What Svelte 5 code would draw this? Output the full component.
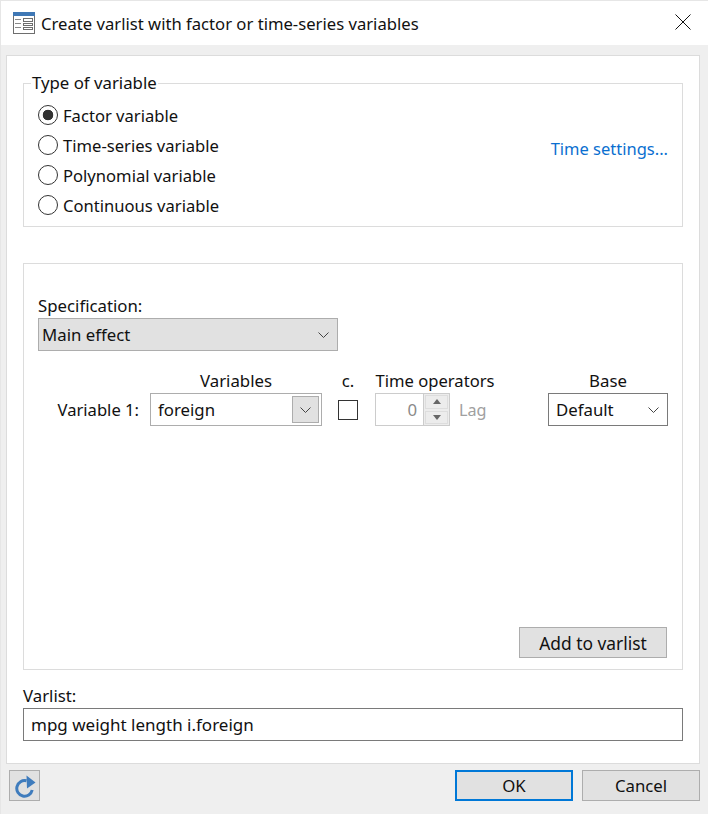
<script lang="ts">
  // Stata-style "Create varlist" dialog.
  const types = ['Factor variable', 'Time-series variable', 'Polynomial variable', 'Continuous variable'];
  let selected = $state(0);
</script>

<div class="window">
  <header class="titlebar">
    <svg class="appicon" width="22" height="22" viewBox="0 0 22 22" aria-hidden="true">
      <rect x="0.5" y="0.5" width="21" height="21" fill="#fff" stroke="#6e6e6e" />
      <rect x="0" y="0" width="22" height="4" fill="#3f78b5" />
      <path d="M2 7.5h6M2 11.5h6M2 15.5h6" stroke="#8a8a8a" fill="none" />
      <rect x="10.5" y="6.5" width="9" height="3" fill="#fff" stroke="#6e6e6e" />
      <rect x="10.5" y="11.5" width="9" height="2" fill="#fff" stroke="#6e6e6e" />
      <rect x="10.5" y="15.5" width="9" height="2" fill="#fff" stroke="#6e6e6e" />
    </svg>
    <span class="title">Create varlist with factor or time-series variables</span>
    <button class="close" aria-label="Close">
      <svg width="16" height="16" viewBox="0 0 16 16"><path d="M0.5 0.5l15 15M15.5 0.5l-15 15" stroke="#111" fill="none" /></svg>
    </button>
  </header>

  <main class="panel">
    <fieldset class="type-group">
      <legend>Type of variable</legend>
      <div class="radios">
        {#each types as label, i}
          <label class="radio">
            <input type="radio" name="vartype" checked={i === selected} onchange={() => (selected = i)} />
            <span>{label}</span>
          </label>
        {/each}
      </div>
      <span class="link">Time settings...</span>
    </fieldset>

    <section class="spec-group">
      <label class="spec-label" for="spec">Specification:</label>
      <div class="combo flat" id="spec">
        <span>Main effect</span>
        <svg class="chev" width="11" height="6" viewBox="0 0 11 6"><path d="M0.5 0.5l5 5 5-5" stroke="#444" fill="none" /></svg>
      </div>

      <div class="var-grid">
        <span></span>
        <span class="head">Variables</span>
        <span class="head">c.</span>
        <span class="head time-head">Time operators</span>
        <span class="head">Base</span>

        <span class="var-label">Variable 1:</span>
        <div class="combo edit">
          <span>foreign</span>
          <span class="drop">
            <svg width="11" height="6" viewBox="0 0 11 6"><path d="M0.5 0.5l5 5 5-5" stroke="#444" fill="none" /></svg>
          </span>
        </div>
        <span class="checkbox"></span>
        <div class="time-cell">
          <div class="spin">
            <span class="spin-val">0</span>
            <span class="spin-btns">
              <span class="up"></span>
              <span class="down"></span>
            </span>
          </div>
          <span class="lag">Lag</span>
        </div>
        <div class="combo base">
          <span>Default</span>
          <svg class="chev" width="11" height="6" viewBox="0 0 11 6"><path d="M0.5 0.5l5 5 5-5" stroke="#444" fill="none" /></svg>
        </div>
      </div>

      <div class="add-row">
        <button class="btn add">Add to varlist</button>
      </div>
    </section>

    <div class="varlist">
      <label for="varlist">Varlist:</label>
      <input id="varlist" value="mpg weight length i.foreign" />
    </div>
  </main>

  <footer class="footer">
    <button class="btn refresh" aria-label="Reset">
      <svg width="24" height="24" viewBox="0 0 24 24" aria-hidden="true">
        <path d="M13.5 6.8A7.8 7.8 0 1 0 19.2 16" fill="none" stroke="#3f7cbd" stroke-width="3" />
        <path d="M13.5 1.5L22.5 8.5 14 14.5z" fill="#3f7cbd" />
      </svg>
    </button>
    <div class="actions">
      <button class="btn ok">OK</button>
      <button class="btn cancel">Cancel</button>
    </div>
  </footer>
</div>

<style>
  :global(body) {
    margin: 0;
    background: #e6e6e6;
  }
  .window {
    box-sizing: border-box;
    width: 707px;
    height: 813px;
    margin: 1px 0 0 1px;
    background: #efefef;
    font-family: "Noto Sans", "Open Sans", sans-serif;
    font-size: 16.8px;
    color: #111;
    display: flex;
    flex-direction: column;
  }
  .titlebar {
    height: 44px;
    flex: none;
    background: #fff;
    display: flex;
    align-items: center;
    padding: 0 17px 0 12px;
  }
  .appicon {
    margin-right: 6px;
    margin-top: -1px;
  }
  .title {
    flex: 1;
    font-size: 16.65px;
  }
  .close {
    border: none;
    background: none;
    padding: 0;
    display: flex;
    margin-top: -2px;
  }
  .panel {
    box-sizing: border-box;
    height: 709px;
    margin: 10px 8px 0 5px;
    background: #fff;
    border: 1px solid #dcdcdc;
    padding: 0 16px;
    display: flex;
    flex-direction: column;
    flex: none;
  }
  .type-group {
    box-sizing: border-box;
    height: 153px;
    margin: 18px 0 0;
    padding: 0 14px;
    border: 1px solid #dcdcdc;
    display: flex;
    align-items: flex-start;
    justify-content: space-between;
    min-inline-size: 0;
  }
  .type-group legend {
    padding: 0 1px;
    margin-left: -7px;
    line-height: 18px;
  }
  .radios {
    display: flex;
    flex-direction: column;
    margin-top: 8px;
    font-size: 16.6px;
  }
  .radio {
    display: flex;
    align-items: center;
    height: 30px;
    gap: 5px;
  }
  .radio input {
    appearance: none;
    box-sizing: border-box;
    width: 20px;
    height: 20px;
    margin: 0;
    border: 1px solid #333;
    border-radius: 50%;
    background: #fff;
  }
  .radio input:checked {
    background: radial-gradient(circle, #333 0 5px, #fff 5.6px);
  }
  .link {
    color: #0a6fd0;
    margin-top: 45px;
    font-size: 16.5px;
  }
  .spec-group {
    box-sizing: border-box;
    height: 407px;
    margin-top: 36px;
    padding: 29px 14px 11px;
    border: 1px solid #dcdcdc;
    display: flex;
    flex-direction: column;
  }
  .spec-label {
    line-height: 26px;
    height: 25px;
  }
  .combo {
    box-sizing: border-box;
    height: 33px;
    display: flex;
    align-items: center;
    justify-content: space-between;
    border: 1px solid #adadad;
    background: #fff;
  }
  .combo.flat {
    width: 300px;
    background: #e1e1e1;
    padding: 0 8px 0 3px;
  }
  .var-grid {
    display: grid;
    grid-template-columns: 112px 188px 37px 173px 120px;
    grid-template-rows: 24px 33px;
    margin-top: 18px;
    align-items: center;
  }
  .head {
    text-align: center;
    padding-bottom: 1px;
  }
  .head:nth-child(2) {
    width: 172px;
  }
  .head:nth-child(3) {
    width: 20px;
  }
  .time-head {
    width: 120px;
    white-space: nowrap;
    font-size: 16.6px;
  }
  .var-label {
    text-align: right;
    padding-right: 11px;
    font-size: 16.6px;
  }
  .combo.edit {
    width: 172px;
    padding: 0 2px 0 7px;
  }
  .drop {
    box-sizing: border-box;
    width: 27px;
    height: 27px;
    background: #e1e1e1;
    border: 1px solid #adadad;
    display: flex;
    align-items: center;
    justify-content: center;
  }
  .checkbox {
    box-sizing: border-box;
    width: 20px;
    height: 20px;
    border: 1px solid #333;
    background: #fff;
  }
  .time-cell {
    display: flex;
    align-items: center;
    gap: 9px;
  }
  .spin {
    box-sizing: border-box;
    width: 75px;
    height: 33px;
    border: 1px solid #ccc;
    display: flex;
    align-items: center;
  }
  .spin-val {
    flex: 1;
    text-align: right;
    padding-right: 6px;
    color: #8a8a8a;
  }
  .spin-btns {
    width: 26px;
    height: 31px;
    background: #ececec;
    border-left: 1px solid #ccc;
    display: flex;
    flex-direction: column;
    gap: 2px;
    box-sizing: border-box;
    padding: 1px;
  }
  .up,
  .down {
    flex: 1;
    border: 1px solid #ddd;
    display: flex;
    align-items: center;
    justify-content: center;
  }
  .up::after {
    content: "";
    border: 4.5px solid transparent;
    border-top: none;
    border-bottom: 5px solid #666;
  }
  .down::after {
    content: "";
    border: 4.5px solid transparent;
    border-bottom: none;
    border-top: 5px solid #666;
  }
  .lag {
    color: #a0a0a0;
    font-size: 16.2px;
  }
  .combo.base {
    width: 120px;
    border-color: #7a7a7a;
    padding: 0 8px 0 7px;
  }
  .add-row {
    margin-top: auto;
    display: flex;
    justify-content: flex-end;
    padding-right: 1px;
  }
  .btn {
    box-sizing: border-box;
    height: 31px;
    border: 1px solid #adadad;
    background: #e1e1e1;
    color: #111;
    font: inherit;
    padding: 0;
  }
  .add {
    width: 148px;
    font-size: 17.4px;
  }
  .varlist {
    display: flex;
    flex-direction: column;
    margin-top: 14px;
  }
  .varlist label {
    line-height: 24px;
  }
  .varlist input {
    box-sizing: border-box;
    height: 33px;
    border: 1px solid #7a7a7a;
    padding: 0 7px;
    font: inherit;
    font-size: 17px;
    color: #111;
    outline: none;
  }
  .footer {
    display: flex;
    justify-content: space-between;
    padding: 6px 8px 0 8px;
  }
  .refresh {
    width: 31px;
    display: flex;
    align-items: center;
    justify-content: center;
  }
  .actions {
    display: flex;
    gap: 9px;
  }
  .ok,
  .cancel {
    width: 118px;
  }
  .ok {
    border: 2px solid #0078d7;
  }
</style>
